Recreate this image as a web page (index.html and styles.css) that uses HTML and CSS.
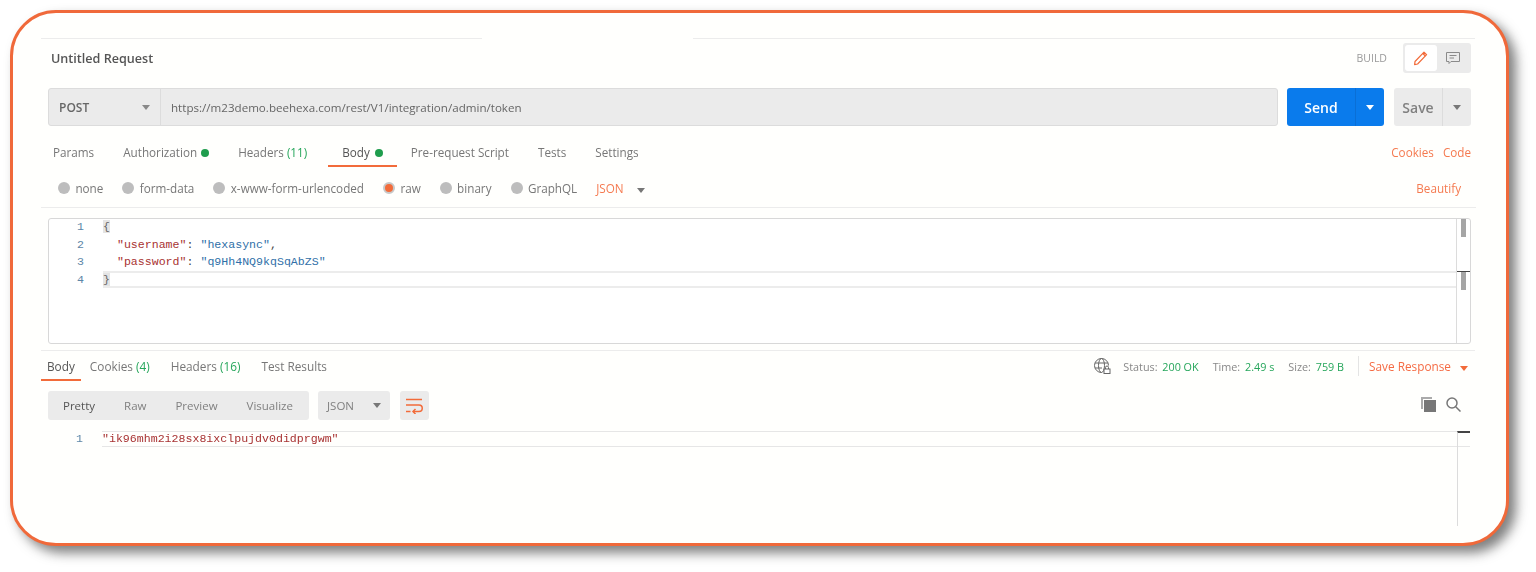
FILE: index.html
```html
<!DOCTYPE html>
<html lang="en">
<head>
<meta charset="utf-8">
<title>Untitled Request</title>
<link rel="stylesheet" href="styles.css">
</head>
<body>
<main class="card">
  <div class="topline"><span class="seg seg-left"></span><span class="seg seg-right"></span></div>

  <header class="title-row">
    <span class="title">Untitled Request</span>
    <div class="build">
      <span class="build-label">BUILD</span>
      <div class="mode">
        <span class="mode-btn active">
          <svg width="18" height="18" viewBox="0 0 18 18" fill="none" stroke="#f26b3a" stroke-width="1.2" stroke-linejoin="round"><path d="M3 12.5 12 3.2l2.6 2.5-9 9.3-3 .7z"/><path d="M10.8 4.5l2.6 2.5"/></svg>
        </span>
        <span class="mode-btn">
          <svg width="16" height="16" viewBox="0 0 16 16" fill="none" stroke="#8a8a8a" stroke-width="1"><path d="M1.5 2.5h13v9H6l-2 2v-2H1.500z"/><path d="M4.500 5.500h7M4.500 8h4.500"/></svg>
        </span>
      </div>
    </div>
  </header>

  <section class="request-row">
    <div class="url-group">
      <div class="method"><span>POST</span><i class="caret"></i></div>
      <div class="url">https://m23demo.beehexa.com/rest/V1/integration/admin/token</div>
    </div>
    <div class="send"><span class="send-label">Send</span><span class="send-drop"><i class="caret white"></i></span></div>
    <div class="save"><span class="save-label">Save</span><span class="save-drop"><i class="caret"></i></span></div>
  </section>

  <nav class="tabs">
    <span class="tab">Params</span>
    <span class="tab">Authorization<i class="dot"></i></span>
    <span class="tab">Headers <em>(11)</em></span>
    <span class="tab current">Body<i class="dot"></i></span>
    <span class="tab">Pre-request Script</span>
    <span class="tab">Tests</span>
    <span class="tab">Settings</span>
    <span class="tab-links"><a>Cookies</a><a>Code</a></span>
  </nav>

  <div class="body-types">
    <span class="radio"><i></i>none</span>
    <span class="radio"><i></i>form-data</span>
    <span class="radio"><i></i>x-www-form-urlencoded</span>
    <span class="radio on"><i></i>raw</span>
    <span class="radio"><i></i>binary</span>
    <span class="radio"><i></i>GraphQL</span>
    <span class="lang">JSON<i class="caret"></i></span>
    <a class="beautify">Beautify</a>
  </div>

  <section class="editor">
    <div class="code">
      <div class="ln"><span class="num">1</span><span class="src"><b class="brace">{</b></span></div>
      <div class="ln"><span class="num">2</span><span class="src">  <span class="key">"username"</span>: <span class="str">"hexasync"</span>,</span></div>
      <div class="ln"><span class="num">3</span><span class="src">  <span class="key">"password"</span>: <span class="str">"q9Hh4NQ9kqSqAbZS"</span></span></div>
      <div class="ln active"><span class="num">4</span><span class="src"><b class="brace">}</b></span></div>
    </div>
    <div class="gutter"><i class="thumb"></i><i class="mark"></i><i class="thumb two"></i></div>
  </section>

  <div class="divider"></div>

  <nav class="res-tabs">
    <span class="res-tab current">Body</span>
    <span class="res-tab">Cookies <em>(4)</em></span>
    <span class="res-tab">Headers <em>(16)</em></span>
    <span class="res-tab">Test Results</span>
    <div class="status">
      <svg class="globe" width="18" height="18" viewBox="0 0 18 18" fill="none" stroke="#666" stroke-width="1"><path d="M8.500 15.500a7 7 0 1 1 7-7"/><ellipse cx="8.500" cy="8.500" rx="3" ry="7"/><path d="M2 6h13M2 11h7"/><rect x="11" y="12" width="6" height="4.500" fill="#fff"/><path d="M12.500 12v-1.500a1.500 1.500 0 0 1 3 0V12"/></svg>
      <span class="st">Status: <em>200 OK</em></span>
      <span class="st">Time: <em>2.49 s</em></span>
      <span class="st">Size: <em>759 B</em></span>
      <span class="save-res">Save Response<i class="caret orange"></i></span>
    </div>
  </nav>

  <div class="res-toolbar">
    <div class="views">
      <span class="view current">Pretty</span>
      <span class="view">Raw</span>
      <span class="view">Preview</span>
      <span class="view">Visualize</span>
    </div>
    <div class="res-lang">JSON<i class="caret"></i></div>
    <div class="wrap">
      <svg width="17" height="16" viewBox="0 0 17 16" fill="none" stroke="#f26b3a" stroke-width="1.500"><path d="M0 1.500h16M0 7h13a2.800 2.800 0 0 1 0 6.500H7"/><path d="M9.500 11 7 13.500 9.500 16"/><path d="M0 13.500h4.500"/></svg>
    </div>
    <div class="res-icons">
      <svg width="15" height="15" viewBox="0 0 15 15"><path d="M0 0h11v2H2v10H0z" fill="#aaa"/><rect x="3" y="3" width="12" height="12" fill="#777"/></svg>
      <svg width="15" height="15" viewBox="0 0 15 15" fill="none" stroke="#777" stroke-width="1.500"><circle cx="6" cy="6" r="5"/><path d="M9.700 9.700 14.500 14.500"/></svg>
    </div>
  </div>

  <section class="res-editor">
    <div class="res-ln"><span class="num">1</span><span class="src res-src"><span class="key">"ik96mhm2i28sx8ixclpujdv0didprgwm"</span></span></div>
    <div class="res-gutter"></div>
  </section>
</main>
</body>
</html>
```
FILE: styles.css
```css
* { box-sizing: border-box; }
html, body { margin: 0; height: 100%; background: #fff; overflow: hidden; }
body {
  padding: 10px 26px 0 10px;
  font-family: "Open Sans", "Liberation Sans", sans-serif;
  font-size: 11.700px;
  color: #707070;
}
i { display: inline-block; font-style: normal; }
em { font-style: normal; color: #26a65b; }
b { font-weight: 400; }

.card {
  width: 1499px;
  height: 536px;
  border: 3px solid #f0693a;
  border-radius: 46px;
  background: #fffffd;
  box-shadow: 7px 7px 12px rgba(60,60,60,.65);
  padding: 25px 31px 0 28px;
  filter: blur(.45px);
}

.topline { display: flex; gap: 211px; height: 1px; }
.seg { height: 1px; background: #ececec; }
.seg-left { width: 441px; }
.seg-right { flex: 1; }

.title-row {
  display: flex; align-items: center; justify-content: space-between;
  height: 30px; margin-top: 4px; padding: 0 4px 0 10px;
}
.title { font-size: 12.600px; font-weight: 600; color: #555; }
.build { display: flex; align-items: center; gap: 16px; }
.build-label { font-size: 10.500px; color: #9a9a9a; }
.mode {
  display: flex; width: 68px; height: 30px; padding: 2px;
  background: #ebebeb; border-radius: 3px;
}
.mode-btn { flex: 1; display: flex; align-items: center; justify-content: center; }
.mode-btn.active { background: #fff; border-radius: 3px; }

.caret {
  width: 0; height: 0;
  border-left: 4px solid transparent; border-right: 4px solid transparent;
  border-top: 5px solid #777;
}
.caret.white { border-top-color: #fff; }
.caret.orange { border-top-color: #f26b3a; }

.request-row { display: flex; height: 38px; margin-top: 15px; padding: 0 4px 0 7px; }
.url-group {
  display: flex; width: 1230px; background: #ebebeb;
  border: 1px solid #dcdcdc; border-radius: 3px;
}
.method {
  display: flex; align-items: center; justify-content: space-between;
  width: 112px; padding: 0 10px 0 10px; border-right: 1px solid #dcdcdc;
  font-size: 12px; font-weight: 600; color: #666;
}
.method .caret { border-top-color: #888; }
.url { display: flex; align-items: center; padding-left: 10px; font-size: 11.600px; color: #666; }
.send {
  display: flex; width: 97px; margin-left: 9px; background: #0a7bec;
  border-radius: 3px; color: #fff; font-size: 14px; font-weight: 600;
}
.send-label { flex: 1; display: flex; align-items: center; justify-content: center; }
.send-drop {
  width: 29px; display: flex; align-items: center; justify-content: center;
  border-left: 1px solid #0a6fd6;
}
.save {
  display: flex; width: 77px; margin-left: 10px; background: #ebebeb;
  border-radius: 3px; color: #808080; font-size: 14px; font-weight: 600;
}
.save-label { flex: 1; display: flex; align-items: center; justify-content: center; }
.save-drop {
  width: 29px; display: flex; align-items: center; justify-content: center;
  border-left: 1px solid #dcdcdc;
}

.tabs { display: flex; height: 42px; margin-top: 5px; padding: 0 4px 0 12px; align-items: center; }
.tab { position: relative; margin-right: 29px; color: #777; line-height: 42px; }
.tab.current { color: #555; margin-left: -8px; margin-right: 14px; padding: 0 14px; }
.tab.current::after {
  content: ""; position: absolute; left: 0; right: 0; bottom: 6px;
  height: 2px; background: #f26b3a;
}
.dot {
  width: 8px; height: 8px; margin-left: 4px; border-radius: 50%;
  background: #1f9d4d; vertical-align: 0;
}
.tab.current .dot { margin-left: 5px; }
.tab-links { margin-left: auto; display: flex; gap: 9px; color: #f57a50; }

.body-types {
  display: flex; align-items: center; height: 30px;
  padding: 0 14px 0 17px; color: #777;
}
.radio { display: flex; align-items: center; margin-right: 19px; }
.radio i {
  width: 12px; height: 12px; margin-right: 5.400px; border-radius: 50%; background: #bdbdbd;
}
.radio.on i { background: #f26b3a; border: 2px solid #c8c8c8; }
.lang { color: #f57a50; }
.lang .caret { margin-left: 13px; }
.beautify { margin-left: auto; color: #f57a50; }

.editor {
  display: flex; height: 126px; margin: 15px 4px 0 7px;
  border: 1px solid #d8d8d8; border-radius: 3px; background: #fff;
  position: relative;
}
.editor::before {
  content: ""; position: absolute; left: -8px; right: -6px; top: -12px;
  height: 1px; background: #ececec;
}
.code { flex: 1; margin-top: -1px; }
.ln {
  display: flex; height: 17.500px;
  font-family: "Liberation Mono", "DejaVu Sans Mono", monospace;
  font-size: 11.600px; line-height: 17.500px;
}
.num { width: 35px; text-align: right; flex: none; color: #5d86a8; }
.src { margin-left: 19px; white-space: pre; color: #444; flex: 1; }
.key { color: #a83232; }
.str { color: #2f6fa8; }
.brace { background: #e4e4e4; color: #666; }
.ln.active { height: 17px; }
.ln.active .src { border-top: 2px solid #ececec; border-bottom: 2px solid #ececec; line-height: 13px; }
.gutter { position: relative; width: 14px; border-left: 1px solid #dcdcdc; }
.thumb { position: absolute; left: 4px; top: 0; width: 5px; height: 18px; background: #a5a5a5; }
.thumb.two { top: 53px; }
.mark { position: absolute; left: 0; right: 0; top: 52px; height: 1px; background: #444; }

.divider { height: 1px; margin-top: 6px; background: #ececec; }

.res-tabs { display: flex; align-items: center; height: 30px; font-size: 11.800px; }
.res-tab { position: relative; margin-right: 21px; line-height: 30px; color: #777; }
.res-tab.current { color: #555; padding: 0 6px; margin-right: 9px; }
.res-tab.current::after {
  content: ""; position: absolute; left: 0; right: 0; bottom: 0;
  height: 2px; background: #f26b3a;
}
.status { margin-left: auto; display: flex; align-items: center; gap: 14px; padding-right: 7px; font-size: 10.800px; color: #888; }
.globe { margin-right: -2px; }
.st em { margin-left: 2px; }
.save-res {
  padding-left: 10px; border-left: 1px solid #e4e4e4;
  color: #f56b44; font-size: 11.800px; line-height: 20px;
}
.save-res .caret { margin-left: 9px; }

.res-toolbar { display: flex; align-items: center; height: 29px; margin-top: 10px; padding: 0 5px 0 7px; font-size: 11.500px; }
.views { display: flex; align-items: center; gap: 29px; height: 29px; width: 261px; padding: 0 15px; background: #ebebeb; border-radius: 3px; }
.view { color: #808080; }
.view.current { color: #555; }
.res-lang {
  display: flex; align-items: center; justify-content: space-between;
  width: 72px; height: 29px; margin-left: 9px; padding: 0 9px;
  background: #ebebeb; border-radius: 3px; color: #808080;
}
.wrap {
  display: flex; align-items: center; justify-content: center;
  width: 29px; height: 29px; margin-left: 10px; background: #ebebeb; border-radius: 3px;
}
.res-icons { margin-left: auto; display: flex; gap: 10px; padding-right: 9px; margin-top: -3px; }

.res-editor { display: flex; height: 95px; margin: 11px 5px 0 7px; }
.res-ln {
  display: flex; flex: 1; height: 16px; align-self: flex-start;
  font-family: "Liberation Mono", "DejaVu Sans Mono", monospace;
  font-size: 11.600px; line-height: 14px;
}
.res-src { border-top: 1px solid #e6e6e6; border-bottom: 1px solid #e6e6e6; }
.res-ln .num { line-height: 16px; }
.res-gutter {
  position: relative; width: 13px;
  border-left: 1px solid #dcdcdc; border-top: 2px solid #444;
}
.res-gutter::after {
  content: ""; position: absolute; left: 0; right: 0; top: 13px; height: 1px; background: #e6e6e6;
}
```
